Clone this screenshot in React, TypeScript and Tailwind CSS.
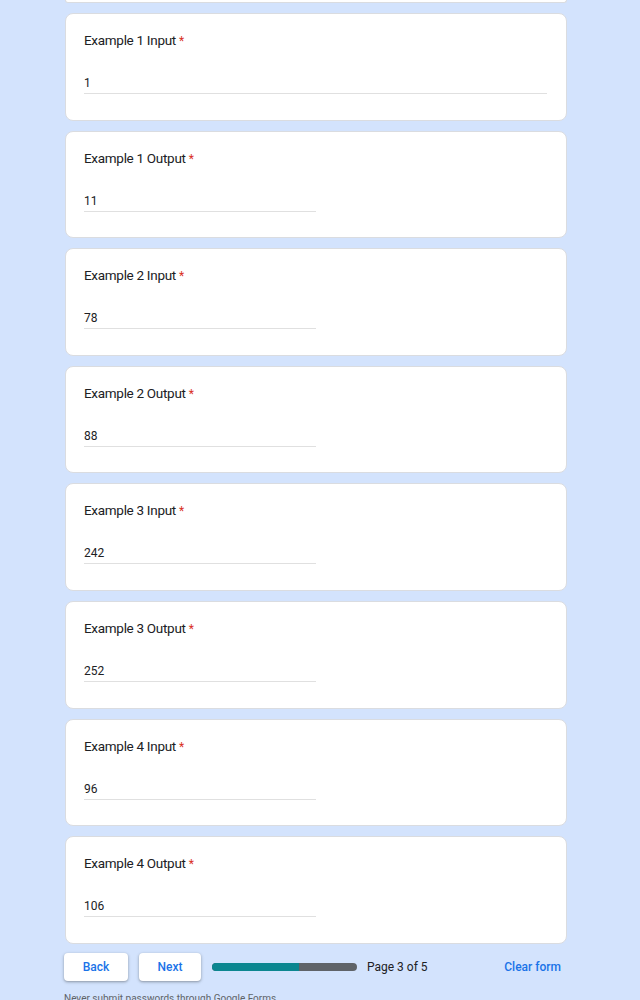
const questions = [
  { label: "Example 1 Input", value: "1", wide: true },
  { label: "Example 1 Output", value: "11" },
  { label: "Example 2 Input", value: "78" },
  { label: "Example 2 Output", value: "88" },
  { label: "Example 3 Input", value: "242" },
  { label: "Example 3 Output", value: "252" },
  { label: "Example 4 Input", value: "96" },
  { label: "Example 4 Output", value: "106" },
];

function QuestionCard({ label, value, wide }: { label: string; value: string; wide?: boolean }) {
  return (
    <div className="h-[107.5px] rounded-lg border border-[#dadce0] bg-white pl-[18px] pr-[19px] pt-[16px]">
      <div className="text-[13.5px] leading-5 tracking-[-0.3px] text-[#202124]">
        {label} <span className="text-[12px] text-[#d93025]">*</span>
      </div>
      <div className={`mt-[22px] border-b border-[#e0e0e0] ${wide ? "w-full" : "w-[232px]"}`}>
        <div className="text-[12px] leading-5 text-[#202124]">{value}</div>
      </div>
    </div>
  );
}

export default function App() {
  return (
    <div className="min-h-screen bg-[#d3e3fd] font-['Roboto',sans-serif]">
      <div className="ml-[65px] w-[502px] flex flex-col gap-[10.1px]">
        <div className="h-[3px] rounded-b-lg border border-t-0 border-[#dadce0] bg-white" />
        {questions.map((q) => (
          <QuestionCard key={q.label} {...q} />
        ))}
      </div>
      <div className="ml-[64px] mr-[79px] mt-[9.5px] flex items-center">
        <button className="h-[28px] w-[64px] rounded bg-white text-[12px] font-medium text-[#1a73e8] shadow-[0_1px_2px_rgba(60,64,67,0.3),0_1px_3px_1px_rgba(60,64,67,0.15)]">
          Back
        </button>
        <button className="ml-[11px] h-[28px] w-[62px] rounded bg-white text-[12px] font-medium text-[#1a73e8] shadow-[0_1px_2px_rgba(60,64,67,0.3),0_1px_3px_1px_rgba(60,64,67,0.15)]">
          Next
        </button>
        <div className="ml-[11px] flex h-[8px] w-[145px] overflow-hidden rounded-full bg-[#5f6368]">
          <div className="h-full w-[87px] bg-[#0b8690]" />
        </div>
        <span className="ml-[10px] text-[12px] text-[#202124]">Page 3 of 5</span>
        <button className="ml-auto text-[12px] font-medium text-[#1a73e8]">Clear form</button>
      </div>
      <div className="ml-[64px] mt-[10px] pb-6 text-[10px] leading-4 text-[#5f6368]">
        Never submit passwords through Google Forms.
      </div>
    </div>
  );
}
